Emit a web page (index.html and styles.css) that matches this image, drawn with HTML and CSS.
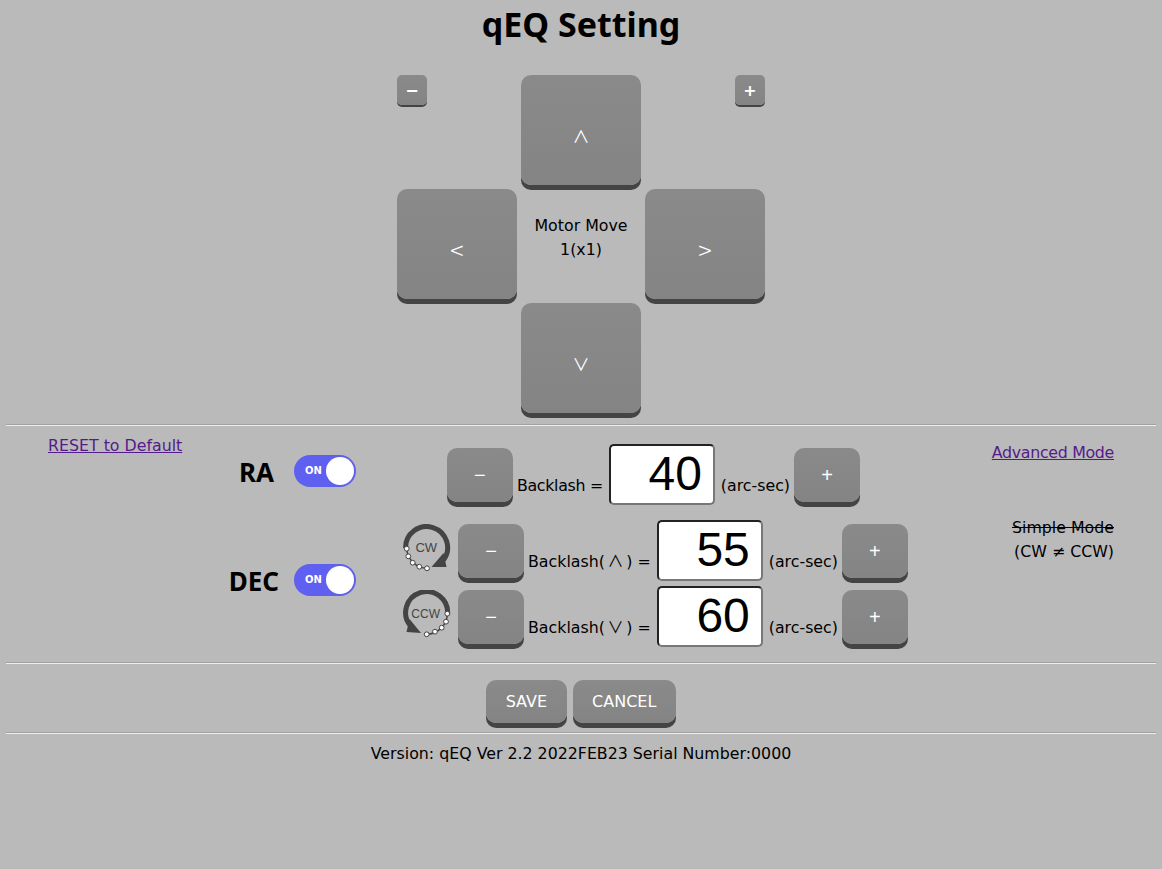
FILE: index.html
```html
<!DOCTYPE html>
<html lang="en">
<head>
    <meta charset="UTF-8">
    <meta name="viewport" content="width=device-width, initial-scale=1.0">
    <title>qEQ Setting</title>
    <link rel="stylesheet" href="styles.css">
</head>
<body>

    <h1>qEQ Setting</h1>

    <!-- motor pad -->
    <div class="pad">
        <button class="key key-small">−</button>
        <button class="key key-big">∧</button>
        <button class="key key-small key-right">+</button>
        <button class="key key-big key-side">&lt;</button>
        <div class="motor">Motor Move<br>1(x1)</div>
        <button class="key key-big key-side">&gt;</button>
        <button class="key key-big pad-down">∨</button>
    </div>

    <hr>

    <!-- backlash -->
    <div class="settings">
        <div class="side-left"><a href="#">RESET to Default</a></div>
        <div class="axis axis-ra">
            <span class="axis-name">RA</span>
            <span class="toggle"><span class="toggle-text">ON</span><span class="toggle-knob"></span></span>
        </div>
        <div class="rows rows-ra">
            <div class="row">
                <button class="key key-step">−</button>
                <span class="label label-short">Backlash =</span>
                <input class="value" type="text" value="40">
                <span class="label">(arc-sec)</span>
                <button class="key key-step">+</button>
            </div>
        </div>
        <div class="side-right"><a href="#">Advanced Mode</a></div>

        <div></div>
        <div class="axis axis-dec">
            <span class="axis-name">DEC</span>
            <span class="toggle"><span class="toggle-text">ON</span><span class="toggle-knob"></span></span>
        </div>
        <div class="rows rows-dec">
            <div class="row">
                <svg class="dir-icon" viewBox="0 0 48 48" width="48" height="48">
                    <path class="ring" d="M2.6 24 A21 21 0 1 1 40.5 36"/>
                    <polygon class="arrow" points="28.5,43 43.5,43 40.5,29"/>
                    <path class="ring-thin" d="M3.7 24.7 A21 21 0 0 0 24 44.3"/>
                    <circle class="dot" cx="3.7" cy="24.7" r="2.4"/>
                    <circle class="dot" cx="5.3" cy="32.3" r="2.4"/>
                    <circle class="dot" cx="9.7" cy="38.7" r="2.4"/>
                    <circle class="dot" cx="16.3" cy="42.7" r="2.4"/>
                    <circle class="dot" cx="24" cy="44.3" r="2.4"/>
                    <text class="dir-text" x="23.3" y="28.4">CW</text>
                </svg>
                <button class="key key-step">−</button>
                <span class="label">Backlash( <span class="wedge">∧</span> ) =</span>
                <input class="value" type="text" value="55">
                <span class="label">(arc-sec)</span>
                <button class="key key-step">+</button>
            </div>
            <div class="row">
                <svg class="dir-icon" viewBox="0 0 48 48" width="48" height="48">
                    <path class="ring" d="M44.6 24 A21 21 0 1 0 7.5 36"/>
                    <polygon class="arrow" points="18,43 3.5,42 6.5,29"/>
                    <path class="ring-thin" d="M44.3 23.7 A21 21 0 0 1 23.7 44.3"/>
                    <circle class="dot" cx="44.3" cy="23.7" r="2.4"/>
                    <circle class="dot" cx="43" cy="31.7" r="2.4"/>
                    <circle class="dot" cx="38.7" cy="37.7" r="2.4"/>
                    <circle class="dot" cx="32" cy="41.7" r="2.4"/>
                    <circle class="dot" cx="23.7" cy="44.3" r="2.4"/>
                    <text class="dir-text dir-text-small" x="22.7" y="28">CCW</text>
                </svg>
                <button class="key key-step">−</button>
                <span class="label">Backlash( <span class="wedge">∨</span> ) =</span>
                <input class="value" type="text" value="60">
                <span class="label">(arc-sec)</span>
                <button class="key key-step">+</button>
            </div>
        </div>
        <div class="side-right side-mode"><s>Simple Mode</s><br>(CW ≠ CCW)</div>
    </div>

    <hr>

    <div class="actions">
        <button class="key key-action">SAVE</button>
        <button class="key key-action">CANCEL</button>
    </div>

    <hr>

    <div class="version">Version: qEQ Ver 2.2 2022FEB23 Serial Number:0000</div>

</body>
</html>
```

FILE: styles.css
```css
body {
    background-color: #bababa;
    margin: 0 6px;
    font-family: "DejaVu Sans", sans-serif;
    font-size: 15.8px;
    line-height: 24px;
    color: #000;
}

h1 {
    font-family: "Noto Sans", sans-serif;
    font-size: 34px;
    line-height: 48px;
    font-weight: bold;
    text-align: center;
    margin: 0 0 27px;
}

hr {
    height: 0;
    margin: 0;
    border: none;
    border-top: 1px solid #a0a0a0;
    border-bottom: 1px solid #eee;
}

a {
    color: #551a8b;
}

/* keys */
.key {
    display: block;
    padding: 0;
    border: none;
    border-radius: 10px;
    background: linear-gradient(#8a8a8a, #848484);
    box-shadow: 0 5px 0 #444;
    color: #fff;
    font-family: inherit;
    font-size: 16px;
    cursor: pointer;
}

.key-big {
    width: 120px;
    height: 110px;
    padding-top: 10px;
    font-family: "Noto Sans CJK JP", sans-serif;
    font-size: 17px;
}

.key-side {
    font-size: 25px;
    font-weight: 300;
}

.key-small {
    width: 30px;
    height: 30px;
    border-radius: 5px;
    box-shadow: 0 2px 0 #444;
    font-weight: bold;
}

.key-right {
    justify-self: end;
}

.key-step {
    width: 66px;
    height: 54px;
    font-family: "Liberation Sans", sans-serif;
    font-size: 20px;
}

.key-action {
    height: 43px;
    padding: 0 19.5px;
}

/* motor pad */
.pad {
    display: grid;
    grid-template-columns: repeat(3, 120px);
    grid-auto-rows: 110px;
    gap: 4px;
    justify-content: center;
    margin-bottom: 11px;
}

.pad-down {
    grid-column: 2;
}

.motor {
    align-self: center;
    margin-bottom: 13px;
    text-align: center;
}

/* backlash */
.settings {
    display: grid;
    grid-template-columns: 220px 130px 598px 202px;
    row-gap: 13px;
    padding: 8px 0 13px;
}

.side-left {
    padding-left: 42px;
}

.side-right {
    padding: 7px 42px 0 0;
    text-align: right;
}

.side-right a {
    letter-spacing: -0.3px;
}

.side-mode {
    margin-top: -4px;
    padding-top: 0;
}

.axis {
    display: flex;
    justify-content: flex-end;
    align-items: center;
    padding-bottom: 9px;
}

.axis-ra {
    padding-top: 10px;
    gap: 20px;
}

.axis-dec {
    gap: 15px;
}

.axis-name {
    position: relative;
    top: 1px;
    font-family: "Noto Sans", sans-serif;
    font-size: 26px;
    font-weight: bold;
}

.toggle {
    display: flex;
    flex: none;
    align-items: center;
    justify-content: space-between;
    box-sizing: border-box;
    width: 62px;
    height: 32px;
    padding: 0 2px 0 11px;
    border-radius: 16px;
    background-color: #6060f0;
}

.toggle-text {
    color: #fff;
    font-size: 10px;
    font-weight: bold;
}

.toggle-knob {
    width: 28px;
    height: 28px;
    border-radius: 50%;
    background-color: #fff;
}

.rows {
    display: flex;
    flex-direction: column;
    gap: 3px;
}

.rows-ra {
    padding: 10px 3px 0 0;
}

.rows-dec {
    padding-left: 1px;
}

.row {
    display: flex;
    justify-content: center;
    align-items: flex-start;
    gap: 4px;
    height: 63px;
}

.row .key-step {
    margin-top: 4px;
}

.label {
    margin-top: 30px;
}

.label-short {
    letter-spacing: -0.3px;
}

.wedge {
    margin: 0 -2.3px;
    font-family: "Noto Sans CJK JP", sans-serif;
    font-size: 16px;
    line-height: 0;
}

.value {
    box-sizing: border-box;
    width: 106px;
    height: 61px;
    margin: 0 2px;
    padding: 0 11px 2px 0;
    border: 2px solid #222;
    border-right-color: #777;
    border-bottom-color: #777;
    border-radius: 5px;
    background-color: #fff;
    color: #000;
    font-family: "Liberation Sans", sans-serif;
    font-size: 48px;
    text-align: right;
}

.dir-icon {
    margin: 4px 3px 0 0;
    flex: none;
}

.ring {
    fill: none;
    stroke: #444;
    stroke-width: 5;
}

.ring-thin {
    fill: none;
    stroke: #444;
    stroke-width: 1.5;
}

.arrow {
    fill: #444;
}

.dot {
    fill: #fff;
    stroke: #444;
    stroke-width: 1;
}

.dir-text {
    fill: #444;
    font-family: "Liberation Sans", sans-serif;
    font-size: 13px;
    text-anchor: middle;
}

.dir-text-small {
    font-size: 12px;
}

/* bottom */
.actions {
    display: flex;
    justify-content: center;
    gap: 6px;
    padding: 16px 0 9px;
}

.version {
    padding-top: 8px;
    text-align: center;
}
```
